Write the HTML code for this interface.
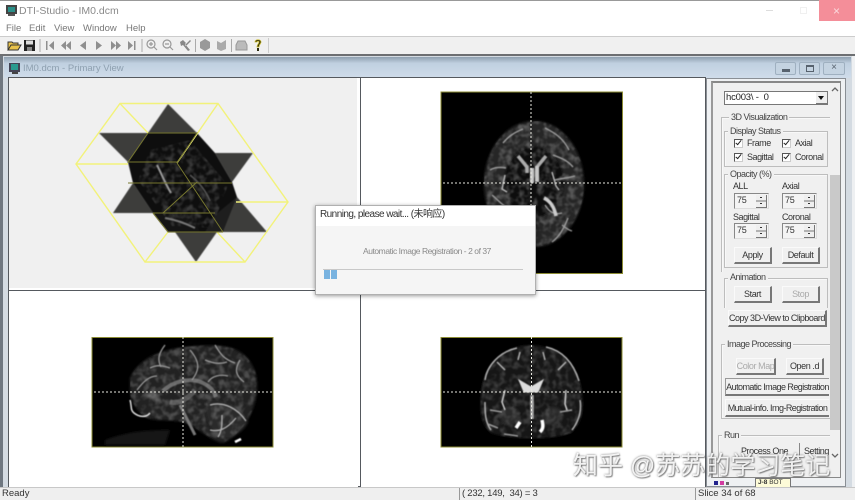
<!DOCTYPE html>
<html><head><meta charset="utf-8"><style>
html,body{margin:0;padding:0;width:855px;height:500px;overflow:hidden;background:#fff}
body{position:relative;font-family:"Liberation Sans","Noto Sans CJK SC",sans-serif;font-size:9px;color:#333}
.a{position:absolute;white-space:pre}
.n{letter-spacing:-.45px}
.r{position:absolute;box-sizing:border-box}
.g{position:absolute;box-sizing:border-box;border:1px solid #bdbdbd;box-shadow:inset 1px 1px 0 #f8f8f8}
.l{position:absolute;white-space:pre;background:#f0f0f0;padding:0 2px;font-size:9px;color:#444;line-height:11px;letter-spacing:-.5px}
.b{position:absolute;box-sizing:border-box;background:#f0f0f0;border-right:2px solid #777;border-bottom:2px solid #777;border-top:1px solid #fafafa;border-left:1px solid #fafafa;text-align:center;font-size:9px;color:#333;letter-spacing:-.42px;display:flex;align-items:center;justify-content:center;white-space:pre;overflow:hidden}
.c{position:absolute;width:9px;height:9px;box-sizing:border-box;border:1px solid #555;border-right-color:#ccc;border-bottom-color:#ccc;background:#fff}
.c:after{content:"";position:absolute;left:2px;top:-1px;width:2px;height:5px;border-right:1.5px solid #222;border-bottom:1.5px solid #222;transform:rotate(40deg)}
.s{position:absolute;box-sizing:border-box;width:35px;height:16px;border:1px solid #888;border-right-color:#ddd;border-bottom-color:#ddd;background:#f4f4f4;font-size:9px;line-height:12px;padding-left:2px;color:#333;letter-spacing:-.3px}
.s:after{content:"";position:absolute;right:1px;top:1px;width:10px;height:12px;background:linear-gradient(#efefef 45%,#777 45%,#777 55%,#efefef 55%);border-right:1px solid #777;border-bottom:1px solid #777}
.s:before{content:"";position:absolute;z-index:1;right:6px;top:3px;width:2px;height:1px;background:#333;box-shadow:0 6px 0 #333}
.wb{position:absolute;top:62px;height:13px;box-sizing:border-box;border:1px solid #9fb0c0;background:#c4d3e1;border-radius:2px}
</style></head><body>
<!-- window chrome -->
<div class="r" style="left:0;top:0;width:855px;height:1px;background:#999"></div>
<div class="r" style="left:819px;top:0;width:36px;height:21px;background:#f48e99"></div>
<div class="a" style="left:833px;top:4px;font-size:12px;color:#fbd9dd">×</div>
<div class="r" style="left:766px;top:10px;width:7px;height:1px;background:#ddd"></div>
<div class="r" style="left:800px;top:7px;width:7px;height:7px;border:1px solid #f0f0f0"></div>
<svg style="position:absolute;left:6px;top:5px;filter:blur(.3px)" width="12" height="12"><rect width="11" height="9" fill="#444"/><rect x="2" y="2" width="7" height="5" fill="#2a8f88"/><rect x="2" y="9" width="7" height="2" fill="#555"/></svg>
<div class="a" style="left:19px;top:5px;font-size:10.500px;color:#8a8a8a;line-height:13px">DTI-Studio - IM0.dcm</div>
<div class="a" style="left:6px;top:23px;font-size:9.500px;color:#777;line-height:12px">File</div>
<div class="a" style="left:29px;top:23px;font-size:9.500px;color:#777;line-height:12px">Edit</div>
<div class="a" style="left:54px;top:23px;font-size:9.500px;color:#777;line-height:12px">View</div>
<div class="a" style="left:83px;top:23px;font-size:9.500px;color:#777;line-height:12px">Window</div>
<div class="a" style="left:126px;top:23px;font-size:9.500px;color:#777;line-height:12px">Help</div>
<div class="r" style="left:0;top:36px;width:855px;height:1px;background:#ccc"></div>
<div class="r" style="left:0;top:37px;width:855px;height:17px;background:#f0f0f0"></div>
<div class="r" style="left:0;top:54px;width:855px;height:2px;background:#6d6f72"></div>
<svg style="position:absolute;left:0;top:37px;filter:blur(.35px)" width="270" height="17" fill="#8f8f8f">
<path d="M8 13V5h4l1 1h5v2H11L8 13h10l3-5H11" fill="#e8c24a" stroke="#333" stroke-width="1"/>
<rect x="24" y="3" width="11" height="11" fill="#222"/><rect x="26" y="3.500" width="7" height="4" fill="#ddd"/><rect x="27" y="10" width="5" height="4" fill="#888"/>
<rect x="39.500" y="2" width="1" height="13" fill="#aaa"/>
<path d="M46 4h1.500v9H46zM54 4v9l-5-4.500z"/>
<path d="M66 4v9l-5-4.500zM71 4v9l-5-4.500z"/>
<path d="M86 4v9l-6-4.500z"/>
<path d="M96 4v9l6-4.500z"/>
<path d="M112 4v9l5-4.500zM117 4v9l5-4.500z" transform="translate(-1)"/>
<path d="M128 4v9l5-4.500zM134 4h1.500v9H134z"/>
<rect x="141.500" y="2" width="1" height="13" fill="#aaa"/>
<g fill="none" stroke="#999" stroke-width="1.200"><circle cx="151" cy="7" r="4"/><path d="M154 10l3 3M149 7h4M151 5v4"/><circle cx="167" cy="7" r="4"/><path d="M170 10l3 3M165 7h4"/></g>
<path d="M180 5l3-2 3 3-1 1 5 6-2 1-5-6-2 1zM190 3l-5 5 1 1 5-5z" fill="#888"/>
<rect x="195" y="2" width="1" height="13" fill="#aaa"/>
<path d="M205 2l5 3v6l-5 3-5-3V5z" fill="#999"/><path d="M217 4l4 2 5-3v9l-5 2-4-2z" fill="#aaa"/>
<rect x="231" y="2" width="1" height="13" fill="#aaa"/>
<path d="M238 4h7l2 4v5h-11V8z" fill="#bbb" stroke="#999"/>
<path d="M255 5c0-3 6-3 6 0 0 2-2 2-2 5h-2c0-3 2-3 2-5 0-1-2-1-2 0z" fill="#2a2a10" stroke="#c8b92c" stroke-width=".8"/><rect x="257" y="11" width="2" height="3" fill="#2a2a10"/>
</svg>
<div class="r" style="left:268px;top:38px;width:1px;height:15px;background:#ccc"></div>
<!-- MDI child frame -->
<div class="r" style="left:0;top:56px;width:855px;height:431px;background:#d4dbe2"></div>
<div class="r" style="left:0;top:56px;width:3px;height:431px;background:#6f7780"></div>
<div class="r" style="left:852px;top:56px;width:3px;height:431px;background:#eef0f2"></div>
<div class="r" style="left:4px;top:57px;width:847px;height:21px;background:linear-gradient(#8fa0b0,#c0d0e0 30%,#cfdcea)"></div>
<svg style="position:absolute;left:9px;top:63px;filter:blur(.3px)" width="12" height="12"><rect width="11" height="9" fill="#445"/><rect x="2" y="1" width="7" height="6" fill="#2a9a8f"/><rect x="3" y="9" width="6" height="2" fill="#444"/></svg>
<div class="a" style="left:23px;top:63px;font-size:9.500px;color:#8ea0b0;line-height:12px">IM0.dcm - Primary View</div>
<div class="wb" style="left:775px;width:21px"><div class="r" style="left:6px;top:6px;width:8px;height:3px;background:#57626e"></div></div>
<div class="wb" style="left:799px;width:21px"><div class="r" style="left:6px;top:2px;width:8px;height:7px;border:1px solid #57626e;border-top-width:2px"></div></div>
<div class="wb" style="left:823px;width:22px;text-align:center;font-size:10px;line-height:10px;color:#57626e">×</div>
<!-- views -->
<div class="r" style="left:8px;top:77px;width:698px;height:410px;background:#fff;border:1px solid #55595e"></div>
<div class="r" style="left:9px;top:78px;width:348px;height:210px;background:#f0f0f0"></div>
<div class="r" style="left:361px;top:78px;width:344px;height:211px;background:#fff"></div>
<div class="r" style="left:9px;top:292px;width:349px;height:195px;background:#fff"></div>
<div class="r" style="left:361px;top:292px;width:344px;height:195px;background:#fff"></div>
<div class="r" style="left:360px;top:78px;width:1px;height:409px;background:#55595e"></div>
<div class="r" style="left:9px;top:290px;width:696px;height:1px;background:#55595e"></div>
<svg style="position:absolute;left:0;top:0" width="855" height="500">
<defs>
<filter id="b1"><feGaussianBlur stdDeviation=".55"/></filter>
<filter id="b2"><feGaussianBlur stdDeviation="1.400"/></filter>
<filter id="n" x="0" y="0" width="100%" height="100%">
<feTurbulence type="fractalNoise" baseFrequency=".16" numOctaves="2" seed="4"/>
<feColorMatrix values="0 0 0 0 .62 0 0 0 0 .62 0 0 0 0 .62 3 0 0 0 -1.250"/>
<feComposite in2="SourceAlpha" operator="in"/>
<feGaussianBlur stdDeviation=".5"/>
</filter>
</defs>
<!-- 3D view -->
<g style="filter:blur(.4px)">
<polygon points="168,104 148,133 197,133" fill="#3d3d3b"/>
<polygon points="99,133 148,133 128,162" fill="#3d3d3b"/>
<polygon points="253,153 215,153 232,182" fill="#3d3d3b"/>
<polygon points="113,213 133,183 153,213" fill="#3d3d3b"/>
<polygon points="196,262 175,232 217,232" fill="#3d3d3b"/>
<polygon points="267,232 223,232 237,197" fill="#3d3d3b"/>
<polygon points="148,133 197,133 215,153 232,182 237,197 223,232 168,232 153,213 133,183 128,162" fill="#0e0e0e"/>
<polygon points="237,197 223,232 205,232 215,215" fill="#1e1e1e"/>
<polygon points="153,213 168,232 200,232 190,213" fill="#141414"/>
</g>
<polygon points="150,150 190,140 228,185 212,228 172,226 138,180" fill="#000" filter="url(#n)" opacity=".22"/>
<g filter="url(#b1)" fill="none" stroke="#8a8a86">
<path d="M157 165c6 12 8 18 14 28" stroke-width="2" stroke="#999"/>
<path d="M165 218c12 2 22 6 30 10" stroke-width="2" stroke="#777"/>
<path d="M190 175c10 8 16 16 20 26" stroke-width="1.500" stroke="#555"/>
</g>
<g fill="none" stroke="#f2f27a" stroke-width="1.400" style="filter:blur(.3px)">
<path d="M120 103.500H218L288 202 245 262H145L76 164z"/>
<path d="M120 103.500L148 133M218 103.500L177 163M76 164H128M288 202H236M145 262L168 232M217 232L245 262"/>
</g>
<g fill="none" stroke="#77772f" stroke-width="1" style="filter:blur(.3px)">
<path d="M148 133H197L177 163M148 133L128 162H177M128 183H232M177 163L223 232M153 213H215M197 182L163 213M153 213L168 232H223"/>
</g>
<!-- axial -->
<rect x="441" y="92" width="181.500" height="181.500" fill="#000" stroke="#8c8c35" stroke-width="1"/>
<g filter="url(#b2)">
<ellipse cx="534" cy="184" rx="50" ry="63" fill="#252525"/>
<ellipse cx="534" cy="182" rx="30" ry="36" fill="#111"/>
</g>
<ellipse cx="534" cy="184" rx="50" ry="63" fill="#000" filter="url(#n)" opacity=".3"/>
<g filter="url(#b1)" fill="none" stroke="#9b9b9b" stroke-width="1.400">
<path d="M503 143c5-6 10-10 20-14M545 128c10 5 18 10 24 22M490 170c5-3 10-3 16-2M553 155c8 3 14 5 20 12M492 195c6 5 8 8 14 12M555 180c8-2 14-2 20-4M490 215c3 8 6 14 12 22M568 218c-4 10-8 18-16 24M545 205c5 8 10 10 17 8M562 225c4 3 6 5 10 6M525 210c-5 5-8 12-5 20"/>
<path d="M552 172l4 14 3 4M505 175l-3 14 5 3" stroke="#bbb"/>
<path d="M518 156l9 11v6M546 156l-9 11v6" stroke="#aaa" stroke-width="3.500"/>
<path d="M532 168v15M537 166v16" stroke="#c6c6c6" stroke-width="4"/>
<path d="M544 198c6 3 10 8 12 18" stroke="#ccc" stroke-width="3.500"/>
</g>
<!-- sagittal -->
<rect x="92" y="337.500" width="181" height="109.500" fill="#000" stroke="#8c8c35" stroke-width="1"/>
<g filter="url(#b2)">
<path d="M130 378c10-22 35-30 65-32 30-2 50 0 60 25 4 14 2 28-3 40-5 14-20 30-30 32-15-4-28-20-45-22-10-1-25 0-32-4-6-4-14-14-15-25z" fill="#222"/>
<path d="M205 402c15-4 35 2 43 20-6 12-20 18-28 16-8-6-15-20-15-36z" fill="#2c2c2c"/>
<path d="M105 440c20-8 40-10 65-10l-5 15h-60z" fill="#151515"/>
<path d="M148 395c3 5 8 7 13 6l-8-14z" fill="#555"/>
</g>
<path d="M130 378c10-22 35-30 65-32 30-2 50 0 60 25 4 14 2 28-3 40-5 14-20 30-30 32-15-4-28-20-45-22-10-1-25 0-32-4-6-4-14-14-15-25z" fill="#000" filter="url(#n)" opacity=".25"/>
<g filter="url(#b1)" fill="none" stroke="#9a9a9a" stroke-width="1.300">
<path d="M190 350c12 14 8 22 2 30M205 360c10 4 16 4 22 2M215 345c5 8 8 14 20 18M240 360c-6 10-4 16 4 22M228 376c-8-2-16 0-20 6M150 368c8-4 14-2 20 0M137 390c6-8 12-14 20-14M165 345c-6 8-8 14-4 22"/>
<path d="M163 391c10-10 28-14 40-8 6 3 10 6 13 14" stroke="#9a9a9a" stroke-width="4" opacity=".6"/>
<path d="M170 402c8 2 16-1 25-12" stroke="#888" stroke-width="5" opacity=".5"/>
<path d="M130 400c2 6 0 10 4 13 5 4 12 5 16 0" stroke="#ddd" stroke-width="1.500"/>
<path d="M210 405c14-4 28 4 36 16M222 415c0 10 0 16-4 22M210 430c8 2 16 0 26-12" stroke="#b0b0b0"/>
<path d="M235 442l6-3" stroke="#fff" stroke-width="2.500"/>
<path d="M180 405l15 30" stroke="#777" stroke-width="3"/>
</g>
<!-- coronal -->
<rect x="441" y="337.500" width="181" height="109.500" fill="#000" stroke="#8c8c35" stroke-width="1"/>
<g filter="url(#b2)">
<path d="M531 345c-30 0-48 22-50 48-2 18 0 32 10 40 14 6 60 8 80 0 10-8 14-22 11-40-2-26-21-48-51-48z" fill="#161616"/>
<ellipse cx="510" cy="416" rx="10" ry="9" fill="#2c2c2c"/><ellipse cx="553" cy="416" rx="10" ry="9" fill="#2c2c2c"/>
</g>
<path d="M531 345c-30 0-48 22-50 48-2 18 0 32 10 40 14 6 60 8 80 0 10-8 14-22 11-40-2-26-21-48-51-48z" fill="#000" filter="url(#n)" opacity=".2"/>
<g filter="url(#b1)" fill="none" stroke="#b0b0b0" stroke-width="1.500">
<path d="M485 380c2-14 14-28 32-32M546 347c18 4 28 18 33 34M497 362l8 8M566 362l-8 8M485 402c0 10 0 20 6 28M580 400c2 12-2 22-8 30M520 352l-2 8M543 352l2 8"/>
<path d="M519 380l12 7 12-7-5 12h-14z" fill="#ddd" stroke="#ddd" stroke-width="1"/>
<path d="M505 390l-3 12 3 8M566 390l-1 14 2 6" stroke="#ccc"/>
<path d="M532 395v24" stroke="#aaa" stroke-width="3.500"/>
<path d="M520 422l-4 6M542 420c2 8 0 10-2 12" stroke="#fff" stroke-width="3.500"/>
<path d="M490 410l12 2M560 412l12-2M488 424l10 4M504 434l14 2" stroke="#999"/>
</g>
<g stroke="#e8e8e0" stroke-width="1" stroke-dasharray="2 2" fill="none">
<path d="M531 92V274M443 183H622M183 337V448M94 392H273M531.500 337V449M443 392H622"/>
</g>
</svg>
<!-- right panel -->
<div class="r" style="left:706px;top:78px;width:140px;height:409px;background:#eff1f3;border:1px solid #8a8f95"></div>
<div class="r" style="left:711px;top:81px;width:130px;height:397px;background:#f0f0f0;border:1px solid #888;border-top:2px solid #888;border-left:2px solid #999;overflow:hidden"></div>
<div class="r" style="left:830px;top:83px;width:10px;height:394px;background:#f0f0f0"></div>
<div class="r" style="left:830px;top:175px;width:10px;height:255px;background:#c9c9c9"></div>
<svg style="position:absolute;left:830px;top:84px" width="10" height="380" fill="none" stroke="#666" stroke-width="1.300"><path d="M2 7l3-3 3 3M2 370l3 3 3-3"/></svg>
<div class="r" style="left:724px;top:91px;width:104px;height:14px;background:#fff;border:1px solid #777"></div>
<div class="a" style="left:726px;top:92px;font-size:9.500px;line-height:12px;color:#222;letter-spacing:-.2px">hc003\ -  0</div>
<div class="r" style="left:816px;top:92px;width:11px;height:12px;background:#eee;border-bottom:1px solid #777"></div>
<div class="r" style="left:818px;top:96px;width:0;height:0;border:3.500px solid transparent;border-top:4px solid #111"></div>
<div class="g" style="left:721px;top:117px;width:109px;height:155px;border-bottom:0;border-right:0"></div>
<div class="l" style="left:729px;top:112px">3D Visualization</div>
<div class="g" style="left:724px;top:131px;width:104px;height:36px"></div>
<div class="l" style="left:728px;top:126px">Display Status</div>
<div class="c" style="left:734px;top:139px"></div><div class="a n" style="left:747px;top:138px;line-height:11px">Frame</div>
<div class="c" style="left:782px;top:139px"></div><div class="a n" style="left:795px;top:138px;line-height:11px">Axial</div>
<div class="c" style="left:734px;top:153px"></div><div class="a n" style="left:747px;top:152px;line-height:11px">Sagittal</div>
<div class="c" style="left:782px;top:153px"></div><div class="a n" style="left:795px;top:152px;line-height:11px">Coronal</div>
<div class="g" style="left:724px;top:174px;width:104px;height:94px"></div>
<div class="l" style="left:728px;top:169px">Opacity (%)</div>
<div class="a n" style="left:733px;top:181px;line-height:11px">ALL</div>
<div class="a n" style="left:782px;top:181px;line-height:11px">Axial</div>
<div class="s" style="left:734px;top:193px">75</div><div class="s" style="left:782px;top:193px">75</div>
<div class="a n" style="left:733px;top:212px;line-height:11px">Sagittal</div>
<div class="a n" style="left:782px;top:212px;line-height:11px">Coronal</div>
<div class="s" style="left:734px;top:223px">75</div><div class="s" style="left:782px;top:223px">75</div>
<div class="b" style="left:734px;top:247px;width:38px;height:17px">Apply</div>
<div class="b" style="left:782px;top:247px;width:38px;height:17px">Default</div>
<div class="g" style="left:724px;top:278px;width:104px;height:30px;border-bottom:0"></div>
<div class="l" style="left:728px;top:272px">Animation</div>
<div class="b" style="left:734px;top:286px;width:38px;height:17px">Start</div>
<div class="b" style="left:782px;top:286px;width:38px;height:17px;color:#aaa">Stop</div>
<div class="b" style="left:728px;top:310px;width:99px;height:17px;letter-spacing:-.5px">Copy 3D-View to Clipboard</div>
<div class="g" style="left:721px;top:344px;width:109px;height:75px;border-right:0"></div>
<div class="l" style="left:725px;top:339px">Image Processing</div>
<div class="b" style="left:736px;top:358px;width:40px;height:17px;color:#aaa">Color Map</div>
<div class="b" style="left:786px;top:358px;width:38px;height:17px">Open .d</div>
<div class="b" style="left:725px;top:378px;width:104px;height:18px;border-top:1px solid #999;border-left:1px solid #999;border-right:0;letter-spacing:-.55px">Automatic Image Registration</div>
<div class="b" style="left:725px;top:399px;width:104px;height:18px;border-right:0;letter-spacing:-.55px">Mutual-info. Img-Registration</div>
<div class="g" style="left:718px;top:435px;width:112px;height:42px;border-right:0;border-bottom:0"></div>
<div class="l" style="left:722px;top:430px">Run</div>
<div class="a n" style="left:741px;top:446px;line-height:11px">Process One</div>
<div class="r" style="left:799px;top:443px;width:1px;height:16px;background:#888"></div>
<div class="a n" style="left:804px;top:446px;line-height:11px">Setting</div>
<div class="r" style="left:714px;top:481px;width:4px;height:4px;background:#22228c"></div>
<div class="r" style="left:720px;top:481px;width:4px;height:4px;background:#d23ca0"></div>
<div class="r" style="left:726px;top:482px;width:3px;height:3px;background:#666"></div>
<div class="r" style="left:755px;top:478px;width:36px;height:9px;background:#fdfbd8;border:1px solid #777;border-bottom:0"></div>
<div class="a" style="left:758px;top:479px;font-size:6.500px;line-height:8px;font-weight:bold;color:#333">J-8 <span style="font-weight:normal">BOT</span></div>
<!-- status bar -->
<div class="r" style="left:0;top:487px;width:855px;height:13px;background:#efefef;border-top:1px solid #c8c8c8"></div>
<div class="a" style="left:2px;top:488px;font-size:9.500px;line-height:12px;color:#333">Ready</div>
<div class="r" style="left:459px;top:488px;width:1px;height:12px;background:#999"></div>
<div class="a" style="left:462px;top:488px;font-size:9.500px;line-height:12px;color:#333;letter-spacing:-.25px">( 232, 149,  34) = 3</div>
<div class="r" style="left:695px;top:488px;width:1px;height:12px;background:#999"></div>
<div class="a" style="left:698px;top:488px;font-size:9.500px;line-height:12px;color:#333">Slice 34 of 68</div>
<!-- watermark -->
<div class="a" style="left:573px;top:452px;font-size:25px;line-height:28px;letter-spacing:0;color:rgba(255,255,255,.88);text-shadow:0 0 2px rgba(70,70,70,.75),1px 1px 1px rgba(90,90,90,.6);font-family:'Liberation Sans','Noto Sans CJK SC',sans-serif">知乎 @苏苏的学习笔记</div>
<!-- dialog -->
<div class="r" style="left:315px;top:205px;width:221px;height:90px;background:#f5f5f5;border:1px solid #b0b0b0;box-shadow:0 1px 4px rgba(0,0,0,.4)"></div>
<div class="r" style="left:316px;top:206px;width:219px;height:20px;background:#fff"></div>
<div class="a" style="left:320px;top:208px;font-size:10px;line-height:14px;color:#333;letter-spacing:-.55px">Running, please wait... (未响应)</div>
<div class="a" style="left:363px;top:245px;font-size:8.500px;line-height:12px;color:#8a8a8a;letter-spacing:-.45px">Automatic Image Registration - 2 of 37</div>
<div class="r" style="left:323px;top:269px;width:200px;height:1px;background:#c8c8c8"></div>
<div class="r" style="left:324px;top:270px;width:6px;height:9px;background:#79b3e0"></div>
<div class="r" style="left:331px;top:270px;width:6px;height:9px;background:#79b3e0"></div>
</body></html>
